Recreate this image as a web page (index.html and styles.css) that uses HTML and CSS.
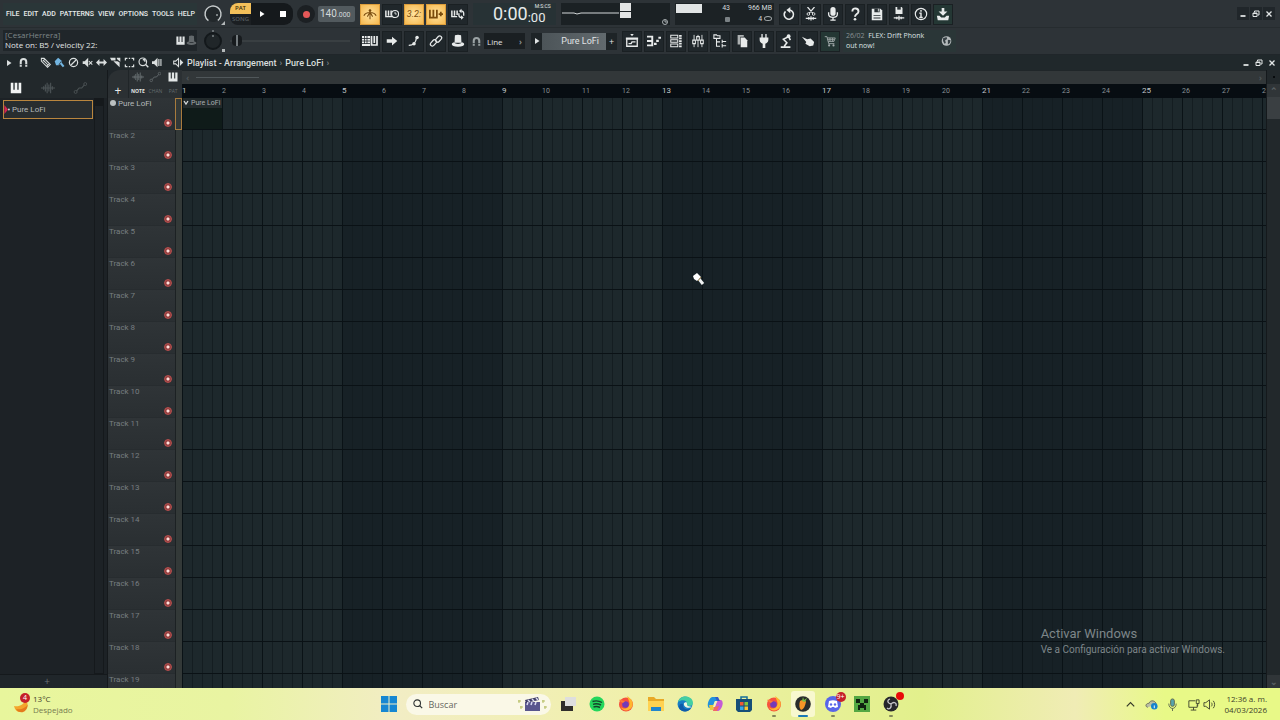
FILE: index.html
```html
<!DOCTYPE html>
<html lang="es">
<head>
  <meta charset="UTF-8" />
  <meta name="viewport" content="width=device-width, initial-scale=1.0"/>
  <title>Playlist - Arrangement</title>
  <link rel="stylesheet" href="styles.css">
</head>
<body>
  <!-- Icon symbols -->
  <svg class="symbols" aria-hidden="true">
    <symbol id="piano" viewBox="0 0 16 16"><path d="M2 2v12h12V2h-3v8h-1.500V2h-3v8H5V2z" fill="currentColor"/></symbol>
    <symbol id="magnet" viewBox="0 0 16 16"><path d="M4 14V7a4 4 0 0 1 8 0v7" fill="none" stroke="currentColor" stroke-width="3"/><path d="M2 11h4M10 11h4" stroke="#20272b"/></symbol>
    <symbol id="wave" viewBox="0 0 16 16"><path d="M0 8h16M3 6v4M5 4v8M7 2v12M9 4v8M11 2v12M13 6v4" stroke="currentColor" stroke-width="1.300"/></symbol>
    <symbol id="auto" viewBox="0 0 16 16"><path d="M4 11.500 7 8h3l3-3.500" fill="none" stroke="currentColor" stroke-width="1.200"/><circle cx="3" cy="12.500" r="1.700" fill="none" stroke="currentColor"/><circle cx="14" cy="3.500" r="1.700" fill="none" stroke="currentColor"/></symbol>
    <symbol id="metronome" viewBox="0 0 16 16"><path d="M8 3v11M1 10c2-5 12-5 14 0M8 6l-3 5M8 6l3 5" fill="none" stroke="currentColor" stroke-width="1.200"/><circle cx="8" cy="4" r="1.500" fill="currentColor"/></symbol>
    <symbol id="pianoclock" viewBox="0 0 16 16"><path d="M1 4v7h8M4 4v6M7 4v6" fill="none" stroke="currentColor" stroke-width="1.700"/><circle cx="11.500" cy="8" r="4" fill="#20272b" stroke="currentColor" stroke-width="1.300"/><path d="M11.500 5.500V8h2" fill="none" stroke="currentColor"/></symbol>
    <symbol id="pianoplus" viewBox="0 0 16 16"><path d="M1 3v9h8V3M5 3v8M11 8h5M13.500 5.500v5" fill="none" stroke="currentColor" stroke-width="2"/></symbol>
    <symbol id="pianoloop" viewBox="0 0 16 16"><path d="M1 4v7h6M4 4v6M7 4v5" fill="none" stroke="currentColor" stroke-width="1.700"/><path d="M14.500 10V7a3 3 0 0 0-3-2.500M9 7v2.500a3 3 0 0 0 3 2.500" fill="none" stroke="currentColor" stroke-width="1.500"/><path d="m12 2-3 2.500L12 7zM11.500 9.500l3 2.500-3 2.500z" fill="currentColor"/></symbol>
    <symbol id="keys" viewBox="0 0 16 16"><path d="M0 3h8v10H0z" fill="currentColor"/><path d="M0 5.500h8M0 8h8M0 10.500h8M2.500 3v8M5 3v8" stroke="#20272b" stroke-width=".8"/><path d="M9.500 3v9h5.500V3M12.300 3v7" fill="none" stroke="currentColor" stroke-width="1.700"/></symbol>
    <symbol id="arrow" viewBox="0 0 16 16"><path d="M2 6h6V3l6 5-6 5v-3H2z" fill="currentColor"/></symbol>
    <symbol id="curve" viewBox="0 0 16 16"><path d="M2 13c6 0 8-3 9-9" fill="none" stroke="currentColor" stroke-width="1.600"/><circle cx="11.500" cy="4" r="2" fill="currentColor"/><circle cx="8" cy="11" r="2" fill="currentColor"/></symbol>
    <symbol id="link" viewBox="0 0 16 16"><g fill="none" stroke="currentColor" stroke-width="1.400"><rect x="1" y="8" width="8" height="4.500" rx="2.200" transform="rotate(-48 5 10.200)"/><rect x="7" y="3.500" width="8" height="4.500" rx="2.200" transform="rotate(-48 11 5.700)"/></g></symbol>
    <symbol id="hat" viewBox="0 0 16 16"><path d="M4.500 1.500c2-1 5-1 7 0l.5 8.500H4z" fill="currentColor"/><path d="M4 9.500c-5 1-4 5 4 5s9-4 4-5c0 2.500-8 2.500-8 0z" fill="currentColor"/></symbol>
    <symbol id="playlist" viewBox="0 0 16 16"><path d="M6 0h4L8 2.500zM1 4h14v2.500H1z" fill="currentColor"/><path d="M2 6v8h12V6M4 11h3l1-2h4" fill="none" stroke="currentColor" stroke-width="1.500"/></symbol>
    <symbol id="roll" viewBox="0 0 16 16"><path d="M0 3h6v10H0M0 8h5" fill="none" stroke="currentColor" stroke-width="2.200"/><path d="M8 10h3v2.500H8zM10.500 6.500h3V9h-3zM13 3h3v2.500h-3z" fill="currentColor"/></symbol>
    <symbol id="rack" viewBox="0 0 16 16"><g fill="none" stroke="currentColor" stroke-width="1.200"><path d="M2 1.500h8v3H2zM2 6.500h8v3H2zM2 11.500h8v3H2z"/><path d="M13 1v14" stroke-width="3" stroke-dasharray="2 1"/></g></symbol>
    <symbol id="mixer" viewBox="0 0 16 16"><path d="M3.500 1v14M8 1v14M12.500 1v14" stroke="currentColor"/><path d="M2 7h3v4H2zM6.500 3h3v4h-3zM11 7h3v4h-3z" fill="#20272b" stroke="currentColor" stroke-width="1.200"/></symbol>
    <symbol id="tree" viewBox="0 0 16 16"><path d="M1 1h3l1 1h3v3H1zM4 5v9h4M4 9h4M10 8.500h5M10 13.500h5M10.500 6.500v4M10.500 11.500v4" fill="none" stroke="currentColor" stroke-width="1.200"/></symbol>
    <symbol id="files" viewBox="0 0 16 16"><path d="M3 1h7v2H6v9H3z" fill="currentColor" opacity=".7"/><path d="M6.500 4H11l3 3v8H6.500z" fill="currentColor"/></symbol>
    <symbol id="plug" viewBox="0 0 16 16"><path d="M5 0h1.500v4h3V0H11v4h2v2c0 3-1 4-3.500 5v5h-3v-5C4 10 3 9 3 6V4h2z" fill="currentColor"/></symbol>
    <symbol id="lamp" viewBox="0 0 16 16"><path d="M11 3 5 6l4 4-3 4M2 15h11M11 3l2 4" fill="none" stroke="currentColor" stroke-width="1.800"/><circle cx="11" cy="2.500" r="2.200" fill="currentColor"/></symbol>
    <symbol id="hand" viewBox="0 0 16 16"><path d="m1 3 6 3 4-1 4 4-1 4-4 1-5-3 1-2z" fill="currentColor"/></symbol>
    <symbol id="cart" viewBox="0 0 16 16"><path d="M2 3h2.500l2 8h6.500M5 4.500h9l-1.500 4H6M8 4.500v4M11 4.500v4M5 6.500h8" fill="none" stroke="currentColor"/><circle cx="7" cy="13" r="1.200" fill="currentColor"/><circle cx="12" cy="13" r="1.200" fill="currentColor"/></symbol>
    <symbol id="undo" viewBox="0 0 16 16"><path d="M4 5a5.300 5.300 0 1 0 5-1.500" fill="none" stroke="currentColor" stroke-width="1.800"/><path d="M9.500 0v7L5 3.500z" fill="currentColor"/></symbol>
    <symbol id="cut" viewBox="0 0 16 16"><path d="m4 0 6 7M12 0 6 7M2 13h12M5.500 11.500v3M8 10.500v5M10.500 11.500v3" stroke="currentColor" stroke-width="1.400"/><circle cx="5" cy="8" r="1.500" fill="none" stroke="currentColor"/><circle cx="11" cy="8" r="1.500" fill="none" stroke="currentColor"/></symbol>
    <symbol id="mic" viewBox="0 0 16 16"><rect x="5" y="0" width="6" height="10" rx="3" fill="currentColor"/><path d="M3 6v2c0 5 10 5 10 0V6M8 12v3M5 15h6" fill="none" stroke="currentColor" stroke-width="1.500"/></symbol>
    <symbol id="help" viewBox="0 0 16 16"><path d="M5 5c0-5 7-4 7 0 0 3-4 3-4 6" fill="none" stroke="currentColor" stroke-width="2.200"/><circle cx="8" cy="14" r="1.500" fill="currentColor"/></symbol>
    <symbol id="save" viewBox="0 0 16 16"><path d="M2 2h10l2 2v11H2z" fill="currentColor"/><path d="M5 2h6v4H5zM4 9h8v1H4zM4 12h8v1H4z" fill="#293034"/><path d="M9 2h1v3H9z" fill="currentColor"/></symbol>
    <symbol id="savenew" viewBox="0 0 16 16"><path d="M4 0h7l1 1v7H4z" fill="currentColor"/><path d="M6 0h4v3H6z" fill="#293034"/><path d="M2 12.500h12M5.500 11v3M8 10v5M10.500 11v3" stroke="currentColor" stroke-width="1.400"/></symbol>
    <symbol id="info" viewBox="0 0 16 16"><circle cx="8" cy="8" r="6.500" fill="none" stroke="currentColor" stroke-width="1.300"/><path d="M6 7h2v5M6 12h4M8 3.500v2" fill="none" stroke="currentColor" stroke-width="1.600"/></symbol>
    <symbol id="download" viewBox="0 0 16 16"><path d="M6.500 1h3v4H13L8 10 3 5h3.500z" fill="currentColor"/><path d="M1 10h3l2 2h4l2-2h3l-1 5H2z" fill="currentColor"/></symbol>
    <symbol id="globe" viewBox="0 0 16 16"><circle cx="8" cy="8" r="7" fill="#b4babb"/><path d="M3 4l5-2 1 3-3 2 1 4-2 1-2-4zM10 6l4 1-1 4-3 2z" fill="#364044"/></symbol>
    <symbol id="min" viewBox="0 0 16 16"><path d="M3 12h10" stroke="currentColor" stroke-width="3.500"/></symbol>
    <symbol id="restore" viewBox="0 0 16 16"><path d="M5 5V2h9v8h-3" fill="none" stroke="currentColor" stroke-width="2"/><path d="M2 6h8v7H2zM2 7h8" fill="none" stroke="currentColor" stroke-width="2"/></symbol>
    <symbol id="close" viewBox="0 0 16 16"><path d="m3 3 10 10M13 3 3 13" stroke="currentColor" stroke-width="2.500"/></symbol>
    <symbol id="pencil" viewBox="0 0 16 16"><path d="M2 2h4l9 9-4 4-9-9zM4 6l3-3M5 5l7 7M10 13l4-4" fill="none" stroke="currentColor" stroke-width="1.500"/></symbol>
    <symbol id="brush" viewBox="0 0 16 16"><path d="M1 6 6 1l6 5-5 6H3z" fill="currentColor"/><path d="m9 8 5 6" stroke="currentColor" stroke-width="3"/><path d="m7 11 4-5" stroke="#20272b"/></symbol>
    <symbol id="ban" viewBox="0 0 16 16"><circle cx="8" cy="8" r="6" fill="none" stroke="currentColor" stroke-width="1.800"/><path d="m4 12 8-8" stroke="currentColor" stroke-width="1.800"/></symbol>
    <symbol id="mute" viewBox="0 0 16 16"><path d="M1 6h3l5-5v14l-5-5H1z" fill="currentColor"/><path d="m10 6 5 5M15 6l-5 5" stroke="currentColor" stroke-width="1.500"/></symbol>
    <symbol id="slip" viewBox="0 0 16 16"><path d="m0 8 5-5v3.500h6V3l5 5-5 5V9.500H5V13z" fill="currentColor"/></symbol>
    <symbol id="slice" viewBox="0 0 16 16"><path d="M0 1h8v4H2zM5 6l9 9V8l-3-2zM10 1h5v6l-5-4z" fill="currentColor"/></symbol>
    <symbol id="select" viewBox="0 0 16 16"><path d="M2 5V2h3M11 2h3v3M14 11v3h-3M5 14H2v-3M7 2h2M7 14h2" fill="none" stroke="currentColor" stroke-width="1.800"/></symbol>
    <symbol id="zoom" viewBox="0 0 16 16"><circle cx="7" cy="7" r="5.500" fill="none" stroke="currentColor" stroke-width="1.700"/><path d="m11 11 4 4M7 4h3v3" fill="none" stroke="currentColor" stroke-width="2"/></symbol>
    <symbol id="sound" viewBox="0 0 16 16"><path d="M0 6h3l5-5v14l-5-5H0z" fill="currentColor"/><path d="M10 3v10M13 3v10" stroke="currentColor" stroke-width="1.600"/></symbol>
    <symbol id="speaker" viewBox="0 0 16 16"><path d="M1 6h3l4-4v12l-4-4H1z" fill="none" stroke="currentColor" stroke-width="1.500"/><path d="M10 3v10l5-5z" fill="currentColor"/></symbol>
    <symbol id="play" viewBox="0 0 16 16"><path d="m4 2 9 6-9 6z" fill="currentColor"/></symbol>
    <symbol id="firefox" viewBox="0 0 16 16"><circle cx="8" cy="8.500" r="7" fill="#f6513e"/><path d="M9 0c5 3 7 7 5 11-3 5-10 4-11 0 2 2 5 2 7 0 3-3 1-6-1-11z" fill="#ffb52e"/><circle cx="7.500" cy="8.500" r="3.300" fill="#743ab8"/><path d="M1 4c2-1 4 1 6 1L5 7 3 6z" fill="#ff7c35"/></symbol>
  </svg>

  <header class="app-header">
    <div class="panel-stack main-panel">
      <nav class="menu">
        <button>FILE</button><button>EDIT</button><button>ADD</button><button>PATTERNS</button><button>VIEW</button><button>OPTIONS</button><button>TOOLS</button><button>HELP</button>
      </nav>
      <div class="hint">
        <div><span class="project">[CesarHerrera]</span><br>Note on: B5 / velocity 22:</div>
        <svg class="icon small"><use href="#piano"/></svg>
        <svg class="icon small faded"><use href="#hat"/></svg>
      </div>
    </div>

    <div class="panel-stack knobs">
      <svg viewBox="0 0 22 22"><circle cx="10" cy="11" r="8" fill="#22282b" stroke="#c9cecf" stroke-width="1.400" stroke-dasharray="40 11" transform="rotate(125 10 11)"/><circle cx="14" cy="12" r="1" fill="#9ba2a4"/><path d="m22 18v4h-4z" fill="#b3b8b9"/></svg>
      <svg viewBox="0 0 22 22"><circle cx="10" cy="11" r="8" fill="#202629" stroke="#13181b" stroke-width="2"/><circle cx="10" cy="6" r="1" fill="#7b8386"/><circle cx="10" cy="1" r="1" fill="#7b8386"/><path d="M19 19h3v3h-3z" fill="#b3b8b9"/></svg>
    </div>

    <div class="panel-stack transport-panel">
      <div class="transport">
        <button class="mode"><span class="pat">PAT</span><span class="song">SONG</span></button>
        <button class="play" aria-label="Play"><svg class="icon tiny"><use href="#play"/></svg></button>
        <button class="stop" aria-label="Stop"><i></i></button>
        <button class="record" aria-label="Record"><i></i></button>
        <output class="tempo">140<small>.000</small></output>
      </div>
      <input class="pitch" type="range" min="0" max="100" value="0" aria-label="Song position">
    </div>

    <div class="panel-stack tools-panel">
      <div class="tool-row">
        <div class="buttons">
          <button class="tool on" aria-label="Metronome"><svg class="icon"><use href="#metronome"/></svg></button>
          <button class="tool" aria-label="Wait for input"><svg class="icon"><use href="#pianoclock"/></svg></button>
          <button class="tool on count" aria-label="Countdown">3.2:</button>
          <button class="tool on" aria-label="Blend notes"><svg class="icon"><use href="#pianoplus"/></svg></button>
          <button class="tool" aria-label="Loop record"><svg class="icon"><use href="#pianoloop"/></svg></button>
        </div>
        <div class="time"><span>0:00</span><div><sup>M:S:CS</sup><small>:00</small></div></div>
        <div class="scope">
          <svg viewBox="0 0 109 22"><path d="M1 10h12l3 1 4-1h38" fill="none" stroke="#d4d8d9"/><path d="M59 0h11v8H59zM59 9h11v6H59z" fill="#e2e4e4"/><circle cx="104" cy="19" r="2.500" fill="none" stroke="#a7adaf"/><path d="M104 17v2h2" fill="none" stroke="#a7adaf"/></svg>
        </div>
        <div class="cpu">
          <i class="load"></i><span>43</span><span>966 MB</span><i class="led"></i><span class="poly">4 <i class="ring"></i></span>
        </div>
        <div class="buttons">
          <button class="tool" aria-label="Undo"><svg class="icon"><use href="#undo"/></svg></button>
          <button class="tool" aria-label="Cut"><svg class="icon"><use href="#cut"/></svg></button>
          <button class="tool" aria-label="Record audio"><svg class="icon"><use href="#mic"/></svg></button>
          <button class="tool" aria-label="Help"><svg class="icon"><use href="#help"/></svg></button>
          <button class="tool" aria-label="Save"><svg class="icon"><use href="#save"/></svg></button>
          <button class="tool" aria-label="Save new version"><svg class="icon"><use href="#savenew"/></svg></button>
          <button class="tool" aria-label="About"><svg class="icon"><use href="#info"/></svg></button>
          <button class="tool green" aria-label="Download"><svg class="icon"><use href="#download"/></svg></button>
        </div>
      </div>
      <div class="tool-row">
        <div class="buttons">
          <button class="tool" aria-label="Typing keyboard"><svg class="icon wide"><use href="#keys"/></svg></button>
          <button class="tool" aria-label="Step edit"><svg class="icon"><use href="#arrow"/></svg></button>
          <button class="tool" aria-label="Slide"><svg class="icon"><use href="#curve"/></svg></button>
          <button class="tool" aria-label="Link"><svg class="icon"><use href="#link"/></svg></button>
          <button class="tool" aria-label="Performance"><svg class="icon"><use href="#hat"/></svg></button>
        </div>
        <div class="snap"><svg class="icon small"><use href="#magnet"/></svg><button>Line <b>›</b></button></div>
        <div class="pattern">
          <button aria-label="Pattern menu"><svg class="icon tiny"><use href="#play"/></svg></button>
          <button class="name">Pure LoFi</button>
          <button aria-label="Add pattern">+</button>
        </div>
        <div class="buttons">
          <button class="tool" aria-label="Playlist"><svg class="icon"><use href="#playlist"/></svg></button>
          <button class="tool" aria-label="Piano roll"><svg class="icon"><use href="#roll"/></svg></button>
          <button class="tool" aria-label="Channel rack"><svg class="icon"><use href="#rack"/></svg></button>
          <button class="tool" aria-label="Mixer"><svg class="icon"><use href="#mixer"/></svg></button>
          <button class="tool" aria-label="Browser"><svg class="icon"><use href="#tree"/></svg></button>
          <button class="tool" aria-label="Project files"><svg class="icon"><use href="#files"/></svg></button>
          <button class="tool" aria-label="Plugins"><svg class="icon"><use href="#plug"/></svg></button>
          <button class="tool" aria-label="Tempo tapper"><svg class="icon"><use href="#lamp"/></svg></button>
          <button class="tool" aria-label="Touch"><svg class="icon"><use href="#hand"/></svg></button>
          <button class="tool green dim" aria-label="Shop"><svg class="icon"><use href="#cart"/></svg></button>
        </div>
        <div class="news"><p><span>26/02</span>&nbsp; FLEX: Drift Phonk<br>out now!</p><svg class="icon"><use href="#globe"/></svg></div>
      </div>
    </div>

    <div class="window-buttons boxed">
      <button aria-label="Minimize"><svg class="icon tiny"><use href="#min"/></svg></button>
      <button aria-label="Restore"><svg class="icon tiny"><use href="#restore"/></svg></button>
      <button aria-label="Close"><svg class="icon tiny"><use href="#close"/></svg></button>
    </div>
  </header>

  <div class="titlebar">
    <button aria-label="Menu"><svg class="icon tiny"><use href="#play"/></svg></button>
    <button class="snap-button" aria-label="Snap"><svg class="icon small"><use href="#magnet"/></svg></button>
    <button aria-label="Draw"><svg class="icon small"><use href="#pencil"/></svg></button>
    <button class="active" aria-label="Paint"><svg class="icon small"><use href="#brush"/></svg></button>
    <button aria-label="Delete"><svg class="icon small"><use href="#ban"/></svg></button>
    <button aria-label="Mute"><svg class="icon small"><use href="#mute"/></svg></button>
    <button aria-label="Slip"><svg class="icon small"><use href="#slip"/></svg></button>
    <button aria-label="Slice"><svg class="icon small"><use href="#slice"/></svg></button>
    <button aria-label="Select"><svg class="icon small"><use href="#select"/></svg></button>
    <button aria-label="Zoom"><svg class="icon small"><use href="#zoom"/></svg></button>
    <button aria-label="Playback"><svg class="icon small"><use href="#sound"/></svg></button>
    <h1><svg class="icon small"><use href="#speaker"/></svg> Playlist - Arrangement <b>›</b> Pure LoFi <b>›</b></h1>
    <div class="window-buttons">
      <button aria-label="Minimize playlist"><svg class="icon tiny"><use href="#min"/></svg></button>
      <button aria-label="Restore playlist"><svg class="icon tiny"><use href="#restore"/></svg></button>
      <button aria-label="Close playlist"><svg class="icon tiny"><use href="#close"/></svg></button>
    </div>
  </div>

  <main class="playlist">
    <aside class="picker">
      <div class="picker-tabs">
        <button class="active" aria-label="Patterns"><svg class="icon"><use href="#piano"/></svg></button>
        <button aria-label="Audio clips"><svg class="icon"><use href="#wave"/></svg></button>
        <button aria-label="Automation clips"><svg class="icon"><use href="#auto"/></svg></button>
      </div>
      <div class="picker-body">
        <div class="picker-list"><button class="picker-item"><svg viewBox="0 0 8 10"><path d="M0 0l4 5-4 5z" fill="#d52450"/><circle cx="5" cy="5" r="1" fill="#ddd"/></svg>Pure LoFi</button></div>
        <div class="picker-scroll"><i></i></div>
      </div>
      <button class="picker-add" aria-label="Add pattern">+</button>
    </aside>

    <section class="tracks">
      <div class="tracks-head">
        <button class="add-track" aria-label="Add track">+</button>
        <div class="clip-modes">
          <svg class="icon"><use href="#wave"/></svg><svg class="icon"><use href="#auto"/></svg><svg class="icon lit"><use href="#piano"/></svg>
          <span class="lit">NOTE</span><span>CHAN</span><span>PAT</span>
        </div>
      </div>
      <div id="trackList"></div>
    </section>

    <section class="arrangement">
      <div class="h-scroll"><b>‹</b><i></i><b class="end">›</b></div>
      <div class="ruler" id="ruler"></div>
      <div class="lanes" id="lanes">
        <div class="clip"><span><svg viewBox="0 0 6 6"><path d="m1 1 2 3 2-3" fill="none" stroke="#d5d9da" stroke-width="1.300"/></svg>Pure LoFi</span></div>
        <svg class="cursor" viewBox="0 0 12 13"><path d="M0 3 4 0l4 4-4 4-3-2z" fill="#fff"/><path d="m6 6 4 5" stroke="#eef1f1" stroke-width="3"/><path d="m5 8 3-4" stroke="#a58a58"/></svg>
        <div class="watermark"><strong>Activar Windows</strong><br>Ve a Configuración para activar Windows.</div>
      </div>
    </section>

    <div class="v-scroll"><i class="dot"></i><b>⌃</b><i class="thumb"></i><b class="down">⌄</b></div>
  </main>

  <footer class="taskbar">
    <button class="weather">
      <span class="moon"><svg viewBox="0 0 18 18"><path d="M1 11c5 1 10-1 12-7 4 7-1 13-6 13-3 0-5-2-6-6z" fill="#f3a52b"/><path d="M3 14c5 1 10-1 12-5-1 10-9 10-12 5z" fill="#e47b1c"/></svg><em>4</em></span>
      <span>13°C<br><small>Despejado</small></span>
    </button>
    <div class="apps">
      <button class="app" aria-label="Inicio"><svg viewBox="0 0 16 16"><path d="M0 0h7.500v7.500H0zM8.500 0H16v7.500H8.500zM0 8.500h7.500V16H0zM8.500 8.500H16V16H8.500z" fill="#1687d2"/></svg></button>
      <label class="search">
        <svg viewBox="0 0 12 12"><circle cx="5" cy="5" r="4" fill="none" stroke="#303434" stroke-width="1.300"/><path d="m8 8 3 3" stroke="#303434" stroke-width="1.500"/></svg>
        <input type="text" placeholder="Buscar" aria-label="Buscar">
        <svg class="clapper" viewBox="0 0 30 16"><path d="M8 6h15v9H8z" fill="#59568d"/><path d="m8 4 13-3 1 3-13 3z" fill="#403e68"/><path d="m11 4 2 2M15 3l2 2M19 2l2 2M11 6l-1 3M15 6l-1 3M19 6l-1 3" stroke="#dadaf1" stroke-width="1.500"/><path d="M2 4v3M1 5h3M4 10v3M3 11h3M26 4v3M25 5h3M28 10v3M27 11h3" stroke="#b5bd63"/></svg>
      </label>
      <div class="app-strip">
        <button class="app" aria-label="Vista de tareas"><svg viewBox="0 0 16 16"><path d="M1 5h12v10H1z" fill="#302e2c"/><path d="M5 1h11v9H5z" fill="#dedede"/></svg></button>
        <button class="app" aria-label="Spotify"><svg viewBox="0 0 16 16"><circle cx="8" cy="8" r="7.500" fill="#24d65c"/><path d="M3.500 5.500c3-1 7-.500 9.500 1M4 8.300c3-1 5.500-.500 8 .700M4.500 11c2-.700 4.500-.500 6.500.500" fill="none" stroke="#15432a" stroke-width="1.400"/></svg></button>
        <button class="app" aria-label="Firefox"><svg><use href="#firefox"/></svg></button>
        <button class="app" aria-label="Explorador"><svg viewBox="0 0 16 16"><path d="M0 1h6l2 2h8v12H0z" fill="#e9a926"/><path d="M0 5h16v10H0z" fill="#ffd251"/><path d="M3 11h10v4H3z" fill="#2186ce"/></svg></button>
        <button class="app" aria-label="Edge"><svg viewBox="0 0 16 16"><circle cx="8" cy="8" r="7.500" fill="#177dc4"/><path d="M1 6C3-2 16-1 16 7c0 3-4 4-6 2 1-5-5-6-9-3z" fill="#43cfa3"/><path d="M6 8c-1 4 3 7 8 4-3 5-10 4-12 0 0-4 2-5 4-4z" fill="#105ba8"/><path d="M9 6c2 1 0 3 2 4l4 1c-4 2-9 0-8-4z" fill="#eef7e0"/></svg></button>
        <button class="app" aria-label="Copilot"><svg viewBox="0 0 16 16"><path d="M5 1h5l2 4H8L5 12H2c-3-2 0-10 3-11z" fill="#2292dc"/><path d="M2 9h6l-2 5H3z" fill="#e6c940"/><path d="M11 4h3c4 2 0 11-3 11H6l3-7z" fill="#c55bd6"/><path d="m7 11 5-1-2 5H6z" fill="#f16b61"/><path d="M8 1h3l2 4h-3z" fill="#335bca"/><path d="m8 5h2L8 11H6z" fill="#f2f0bb"/></svg></button>
        <button class="app" aria-label="Store"><svg viewBox="0 0 16 16"><path d="M5 4V1h6v3" fill="none" stroke="#166f9c" stroke-width="1.500"/><path d="M0 3h16v11l-2 2H2l-2-2z" fill="#164f78"/><path d="M4 6h3.500v3.500H4z" fill="#f05a35"/><path d="M8.500 6H12v3.500H8.500z" fill="#83c63e"/><path d="M4 10.500h3.500V14H4z" fill="#36a9e8"/><path d="M8.500 10.500H12V14H8.500z" fill="#fac532"/></svg></button>
        <button class="app open" aria-label="Firefox privado"><svg><use href="#firefox"/></svg></button>
        <button class="app open current" aria-label="FL Studio"><svg viewBox="0 0 16 16"><circle cx="8" cy="8" r="7.800" fill="#292c2c"/><path d="M5 5c2-2 6-1 6 1-1 4-2 7-5 8-2-2-2-6-1-9z" fill="#f79527"/><path d="M7 5 8 1l1 3 3-2-2 4z" fill="#76bf45"/></svg></button>
        <button class="app open" aria-label="Discord"><svg viewBox="0 0 16 16"><circle cx="8" cy="8" r="8" fill="#5865e8"/><path d="M4 5c3-1 5-1 8 0l1 6-3 1-1-1H7l-1 1-3-1z" fill="#fff"/><circle cx="6" cy="8.500" r="1.200" fill="#5865e8"/><circle cx="10" cy="8.500" r="1.200" fill="#5865e8"/></svg><em>9+</em></button>
        <button class="app" aria-label="Minecraft"><svg viewBox="0 0 16 16"><path d="M0 0h16v16H0z" fill="#53a743"/><path d="M2 3h4v4H2zM10 3h4v4h-4zM6 7h4v2h2v5h-2v-2H6v2H4V9h2z" fill="#102111"/></svg></button>
        <button class="app open" aria-label="OBS"><svg viewBox="0 0 16 16"><circle cx="8" cy="8" r="7.500" fill="#26262b"/><path d="M8 8c-4-1-4-4-1-5M8 8c3-3 6-1 5 2M8 8c1 4-2 6-4 4" fill="none" stroke="#c6c6ca" stroke-width="1.300"/></svg><em class="rec"></em></button>
      </div>
    </div>
    <div class="tray">
      <svg viewBox="0 0 14 14"><path d="m3 9 4-4 4 4" fill="none" stroke="#343827" stroke-width="1.300"/></svg>
      <svg viewBox="0 0 14 14"><path d="M3 10c-4-1-1-5 1-4 2-5 8-3 8 1" fill="#b9bea3" stroke="#666b5b"/><circle cx="10" cy="9" r="3.500" fill="#1583cd"/><path d="M10 8v3" stroke="#fff"/></svg>
      <svg viewBox="0 0 14 14"><rect x="5" y="1" width="4" height="8" rx="2" fill="#55a4ae" stroke="#5d684e"/><path d="M3 6c0 7 8 7 8 0M7 11v3" fill="none" stroke="#5d684e"/></svg>
      <span class="net"><svg viewBox="0 0 14 14"><path d="M9 3H2v7h9V7M4 13h6M7 10v3M10 2h3v4h-3zM11.500 6v3" fill="none" stroke="#41452f"/></svg><svg viewBox="0 0 14 14"><path d="M1 5h2l4-3v10L3 9H1zM9 5c1 1 1 3 0 4M11 3c2 2 2 6 0 8" fill="none" stroke="#41452f"/></svg></span>
      <time>12:36 a. m.<br>04/03/2026</time>
    </div>
  </footer>

  <script>
    const ruler = document.getElementById("ruler");
    const trackList = document.getElementById("trackList");
    const lanes = document.getElementById("lanes");

    // Bar numbers
    for (let bar = 1; bar <= 28; bar++) {
      ruler.innerHTML += `<span class="${bar % 4 === 1 ? "strong" : ""}">${bar}</span>`;
    }

    // Track headers and their lanes
    for (let n = 1; n <= 19; n++) {
      const name = n === 1 ? `<i class="badge"></i>Pure LoFi` : `Track ${n}`;
      trackList.innerHTML += `
        <div class="track ${n === 1 ? "selected" : ""}">
          <div class="track-body"><span>${name}</span><button class="arm" aria-label="Mute track ${n}"></button></div>
          <div class="track-strip"></div>
        </div>`;
      lanes.insertAdjacentHTML("beforeend", `<div class="lane"></div>`);
    }
  </script>
</body>
</html>
```
FILE: styles.css
```css
* {
  box-sizing: border-box;
}

body {
  margin: 0;
  height: 100vh;
  display: flex;
  flex-direction: column;
  overflow: hidden;
  background: #1d2327;
  color: #c5cacc;
  font-family: "Open Sans", "Noto Sans", sans-serif;
  font-size: 9px;
}

button {
  border: 0;
  padding: 0;
  margin: 0;
  background: none;
  color: inherit;
  font: inherit;
  display: flex;
  align-items: center;
  justify-content: center;
}

svg {
  display: block;
  flex: none;
}

.symbols {
  position: absolute;
  width: 0;
  height: 0;
}

.icon {
  width: 14px;
  height: 14px;
}

.icon.small {
  width: 11px;
  height: 11px;
}

.icon.tiny {
  width: 8px;
  height: 8px;
}

.icon.wide {
  width: 16px;
  height: 16px;
}

/* Header */
.app-header {
  flex: none;
  display: flex;
  height: 55px;
  padding: 3px 4px 3px 3px;
  background: linear-gradient(#2d3337 27px, #262c2f 27px 28px, #2d3337 28px);
  border-bottom: 1px solid #20262a;
}

.panel-stack {
  flex: none;
  display: flex;
  flex-direction: column;
  gap: 5px;
}

.panel-stack > * {
  height: 22px;
}

.main-panel {
  width: 194px;
  margin-right: 6px;
}

.menu {
  display: flex;
  align-items: center;
  justify-content: space-between;
  padding: 0 2px 0 3px;
  background: #2a3638;
  color: #e6eaea;
  font-family: Roboto, "Open Sans", sans-serif;
  font-size: 7px;
  font-weight: 500;
}

.hint {
  display: flex;
  align-items: center;
  padding: 0 0 0 2px;
  background: #20262a;
  color: #e1e5e6;
  font-size: 8px;
  line-height: 10px;
}

.hint div {
  flex: 1;
}

.hint .project {
  color: #7f8689;
}

.faded {
  opacity: 0.35;
}

.knobs {
  width: 22px;
  margin-right: 5px;
}

.transport-panel {
  width: 125px;
  margin-right: 5px;
}

.transport {
  display: flex;
  align-items: center;
}

.mode {
  flex: none;
  width: 21px;
  height: 22px;
  flex-direction: column;
  border-radius: 8px 0 0 8px;
  overflow: hidden;
  background: #1b1f22;
  font-size: 6px;
  font-weight: 600;
  line-height: 11px;
}

.mode span {
  width: 100%;
}

.mode .pat {
  background: #f3c05a;
  color: #3c2a08;
}

.mode .song {
  color: #555c60;
}

.play,
.stop {
  flex: none;
  width: 21px;
  height: 22px;
  background: #15191c;
  color: #fff;
}

.stop {
  border-radius: 0 9px 9px 0;
}

.stop i {
  width: 6px;
  height: 6px;
  background: #fff;
}

.record {
  flex: none;
  width: 18px;
  height: 18px;
  margin: 0 3px 0 4px;
  border-radius: 50%;
  background: #1c2023;
}

.record i {
  width: 7px;
  height: 7px;
  border-radius: 50%;
  background: #e45858;
}

.tempo {
  flex: 1;
  height: 16px;
  padding-left: 2px;
  border-radius: 2px;
  background: #525a5e;
  color: #d3d8da;
  font-family: Roboto, "Open Sans", sans-serif;
  font-size: 10px;
  line-height: 16px;
}

.tempo small {
  font-size: 7px;
}

.pitch {
  appearance: none;
  width: 120px;
  margin: 0;
  background: linear-gradient(#393f42, #393f42) center / 100% 2px no-repeat;
}

.pitch::-webkit-slider-thumb {
  appearance: none;
  width: 10px;
  height: 11px;
  margin-left: 2px;
  border-radius: 4px;
  background: linear-gradient(90deg, #171b1e 4px, #737a7d 4px 6px, #171b1e 6px);
}

.tool-row {
  display: flex;
  align-items: center;
  gap: 5px;
}

.buttons {
  display: flex;
  gap: 2px;
}

.tool {
  width: 20px;
  height: 21px;
  background: #20272b;
  border: 1px solid #1a2023;
  color: #e8ebeb;
}

.tool.on {
  background: radial-gradient(#ffe3a0, #f6b84e);
  border-color: #dd9e3c;
  color: #7a4b0c;
}

.tool.count {
  font-family: Roboto, "Open Sans", sans-serif;
  font-size: 9px;
  font-style: italic;
}

.tool.green {
  background: #243734;
}

.tool.dim {
  color: #a3abac;
}

.time {
  display: flex;
  width: 83px;
  height: 22px;
  padding-left: 20px;
  background: #273235;
  color: #e6eaeb;
  font-family: Roboto, "Open Sans", sans-serif;
  font-size: 18px;
  line-height: 22px;
  white-space: nowrap;
}

.time div {
  display: flex;
  flex-direction: column;
}

.time small {
  font-size: 13px;
  line-height: 15px;
}

.time sup {
  padding-left: 7px;
  font-size: 5px;
  line-height: 7px;
}

.scope {
  width: 109px;
  height: 22px;
  background: #1b2124;
}

.cpu {
  display: grid;
  grid-template-columns: 26px 1fr 42px;
  width: 99px;
  height: 22px;
  padding: 0 2px 0 1px;
  background: #1c2225;
  color: #d7dbdc;
  font-family: Roboto, "Open Sans", sans-serif;
  font-size: 7px;
  line-height: 11px;
  text-align: right;
}

.cpu .load {
  height: 9px;
  margin-top: 1px;
  background: #e1e4e4;
}

.cpu .led {
  grid-column: 2;
  justify-self: end;
  align-self: center;
  width: 5px;
  height: 5px;
  border-radius: 1px;
  background: #7b8285;
}

.cpu .ring {
  display: inline-block;
  width: 8px;
  height: 5px;
  border: 1px solid #a4aaac;
  border-radius: 50%;
}

.snap {
  display: flex;
  align-items: center;
  gap: 2px;
  width: 54px;
  margin-left: -2px;
  color: #9ba2a4;
}

.snap button {
  flex: 1;
  height: 16px;
  padding: 0 3px;
  justify-content: space-between;
  background: #1a1f22;
  color: #e1e4e5;
  font-size: 8px;
}

.snap b {
  color: #8a9193;
}

.pattern {
  display: flex;
  width: 86px;
  height: 17px;
  margin-left: 1px;
}

.pattern button {
  flex: 1;
  background: #1e2427;
  color: #e1e4e5;
}

.pattern .name {
  flex: none;
  width: 64px;
  justify-content: flex-end;
  padding-right: 7px;
  background: linear-gradient(90deg, #4c5458, #626a6e);
  font-family: Roboto, "Open Sans", sans-serif;
  font-size: 9px;
}

.news {
  display: flex;
  align-items: center;
  justify-content: space-between;
  width: 113px;
  height: 22px;
  margin-left: -2px;
  padding: 0 4px 0 3px;
  background: #2a3637;
  font-size: 7px;
  line-height: 10px;
  white-space: nowrap;
}

.news p {
  margin: 0;
  color: #dfe3e4;
}

.news p span {
  color: #899194;
}

.news .icon {
  width: 11px;
}

.window-buttons {
  display: flex;
  margin-left: auto;
  color: #e2e6e6;
}

.window-buttons button {
  width: 13px;
  height: 13px;
}

.window-buttons.boxed {
  margin-top: 4px;
  align-items: flex-start;
}

.boxed button {
  background: #20262a;
  border-right: 1px solid #2d3337;
}

/* Playlist window */
.titlebar {
  flex: none;
  display: flex;
  align-items: center;
  height: 15px;
  padding: 0 2px;
  background: #20282b;
  color: #d9dede;
}

.titlebar > button {
  width: 14px;
}

.titlebar .snap-button {
  margin-right: 8px;
}

.titlebar .active {
  color: #72b5e0;
}

.titlebar h1 {
  display: flex;
  align-items: center;
  gap: 3px;
  margin: 0 0 0 9px;
  font-family: Roboto, "Open Sans", sans-serif;
  font-size: 9px;
  font-weight: 500;
}

.titlebar h1 b {
  color: #7a8285;
}

.playlist {
  flex: 1;
  display: flex;
  min-height: 0;
  overflow: hidden;
}

.picker {
  flex: none;
  display: flex;
  flex-direction: column;
  width: 108px;
  border-right: 1px solid #15191c;
  background: #1d2226;
}

.picker-tabs {
  display: flex;
  align-items: flex-end;
  height: 28px;
  padding-bottom: 3px;
  background: #22282b;
  color: #4b5255;
}

.picker-tabs button {
  width: 32px;
}

.picker-tabs .active {
  color: #f2f4f4;
}

.picker-body {
  flex: 1;
  display: flex;
}

.picker-list {
  width: 94px;
  padding: 2px 1px 0 3px;
}

.picker-item {
  width: 100%;
  height: 19px;
  justify-content: flex-start;
  border: 1px solid #b9863e;
  background: #282d2f;
  color: #b4b9ba;
}

.picker-item,
.track-body {
  font-family: Roboto, "Open Sans", sans-serif;
  font-size: 8px;
}

.picker-item svg {
  width: 8px;
  height: 9px;
}

.picker-scroll {
  width: 10px;
  border: 1px solid #15191c;
  border-top: 0;
}

.picker-scroll i {
  display: block;
  height: 8px;
  background: #15191c;
}

.picker-add {
  height: 14px;
  padding-right: 13px;
  border-top: 1px solid #15191c;
  background: #20262a;
  color: #6b7174;
  font-size: 10px;
  line-height: 13px;
}

.tracks {
  flex: none;
  width: 74px;
  background: #20262a;
}

.tracks-head {
  display: flex;
  height: 28px;
  border-radius: 12px 0 0 0;
  background: #2b3033;
}

.add-track {
  width: 21px;
  padding-top: 12px;
  border-right: 1px solid #202528;
  color: #e7eaea;
  font-size: 12px;
}

.clip-modes {
  flex: 1;
  display: grid;
  grid-template-columns: repeat(3, 1fr);
  grid-template-rows: 14px 14px;
  place-items: center;
  color: #646b6e;
  font-size: 5px;
}

.clip-modes .icon {
  width: 12px;
  height: 12px;
}

.clip-modes .lit {
  color: #e4e7e7;
  font-weight: bold;
}

.track {
  display: flex;
  height: 32px;
}

.track-body {
  flex: 1;
  display: flex;
  justify-content: space-between;
  padding: 0 3px 2px 1px;
  border-bottom: 1px solid #272c2f;
  background: linear-gradient(#2f3437, #2a2f32);
  color: #777e81;
  line-height: 11px;
}

.selected .track-body {
  color: #b4b9ba;
}

.badge {
  display: inline-block;
  width: 6px;
  height: 6px;
  margin: 0 2px 0 1px;
  border-radius: 50%;
  background: #bbc0c1;
}

.arm {
  align-self: flex-end;
  width: 8px;
  height: 8px;
  border: 1px solid #b94e4e;
  border-radius: 50%;
  background: radial-gradient(#ffe0dc 1px, #94403f 2px);
}

.track-strip {
  width: 7px;
  border-left: 1px solid #1c2123;
  background: #333938;
}

.selected .track-strip {
  border: 1px solid #a87b3d;
}

.arrangement {
  flex: 1;
  min-width: 0;
  overflow: hidden;
}

.h-scroll {
  display: flex;
  align-items: center;
  height: 14px;
  padding: 0 4px;
  border-top: 1px solid #202629;
  background: #323739;
  color: #4c5356;
}

.h-scroll i {
  width: 63px;
  height: 1px;
  margin-left: 7px;
  background: #50575a;
}

.h-scroll .end {
  margin-left: auto;
}

.ruler {
  display: flex;
  height: 14px;
  background: #070d12;
  color: #8b9296;
  font-family: Roboto, "Open Sans", sans-serif;
  font-size: 7px;
  line-height: 14px;
}

.ruler span {
  flex: none;
  width: 40px;
}

.ruler .strong {
  color: #c3c8ca;
  font-size: 8px;
}

.lanes {
  position: relative;
}

.lane {
  height: 32px;
  border-bottom: 1px solid #0a1115;
  background:
    repeating-linear-gradient(90deg, #0a1216 0 1px, transparent 1px 40px),
    repeating-linear-gradient(90deg, #141d21 0 1px, transparent 1px 10px),
    repeating-linear-gradient(90deg, #1d282c 0 160px, #172126 160px 320px);
}

.clip {
  position: absolute;
  top: 0;
  left: 1px;
  width: 39px;
  height: 31px;
  background: #0f1b19;
  color: #a8afb1;
  font-family: Roboto, "Open Sans", sans-serif;
  font-size: 7px;
  line-height: 10px;
}

.clip span {
  display: flex;
  align-items: center;
  gap: 2px;
  background: #222a2c;
  white-space: nowrap;
}

.clip svg {
  width: 6px;
  height: 6px;
}

/* Brush pointer over the lanes */
.cursor {
  position: absolute;
  top: 175px;
  left: 511px;
  width: 12px;
}

.watermark {
  position: absolute;
  top: 528px;
  right: 41px;
  color: #7d8689;
  font-family: Roboto, "Open Sans", sans-serif;
  font-size: 10px;
  line-height: 15px;
}

.watermark strong {
  font-size: 13px;
  font-weight: normal;
}

.v-scroll {
  flex: none;
  display: flex;
  flex-direction: column;
  align-items: center;
  width: 14px;
  border-left: 1px solid #15191c;
  background: #22282b;
  color: #596063;
}

.v-scroll .dot {
  width: 2px;
  height: 2px;
  margin: 6px 0;
  background: #080b0d;
}

.v-scroll b {
  width: 100%;
  height: 13px;
  background: #303538;
  line-height: 13px;
  text-align: center;
}

.v-scroll .thumb {
  width: 100%;
  height: 22px;
  background: #3a3f42;
}

.v-scroll .down {
  margin-top: auto;
}

/* Windows taskbar */
.taskbar {
  flex: none;
  display: grid;
  grid-template-columns: 1fr auto 1fr;
  align-items: center;
  height: 32px;
  padding: 0 13px;
  background: linear-gradient(90deg, #e8f69c, #e9f4a2 18%, #f2edc4 31%, #f0f0aa 50%, #e2f08c 72%, #f0ecb5 84%, #e8f987 91%, #e8f987);
  color: #3c4029;
  font-size: 8px;
}

.weather {
  justify-self: start;
  gap: 2px;
  line-height: 11px;
  text-align: left;
}

.weather small {
  color: #767b50;
  font-size: 8px;
}

.moon {
  position: relative;
}

.moon svg {
  width: 18px;
  height: 18px;
}

.taskbar em {
  position: absolute;
  top: -2px;
  right: 1px;
  min-width: 10px;
  height: 10px;
  border-radius: 5px;
  background: #c5202a;
  color: #fff;
  font-size: 7px;
  font-style: normal;
  line-height: 10px;
  text-align: center;
}

.apps {
  display: flex;
  align-items: center;
}

.app {
  position: relative;
  width: 24px;
  height: 26px;
}

.app svg {
  width: 16px;
  height: 16px;
}

.app.current {
  border-radius: 3px;
  background: #f8f8cf;
}

.app.open::after {
  content: "";
  position: absolute;
  bottom: 0;
  left: 10px;
  width: 4px;
  height: 2px;
  border-radius: 1px;
  background: #85885b;
}

.app.current::after {
  left: 7px;
  width: 10px;
  background: #1a79b5;
}

.app em {
  top: 1px;
  right: -1px;
}

.taskbar .rec {
  min-width: 8px;
  height: 8px;
  background: #e90909;
}

.search {
  display: flex;
  align-items: center;
  gap: 6px;
  width: 145px;
  height: 21px;
  margin: 0 5px 0 5px;
  padding: 0 4px 0 7px;
  border-radius: 11px;
  background: #faf8e7;
}

.search svg {
  width: 10px;
  height: 10px;
}

.search input {
  flex: 1;
  min-width: 0;
  padding: 0;
  border: 0;
  background: none;
  font: 9px "Open Sans", sans-serif;
}

.search input::placeholder {
  color: #66675e;
}

.search .clapper {
  width: 30px;
  height: 16px;
}

.app-strip {
  display: flex;
  justify-content: space-between;
  width: 348px;
}

.tray {
  justify-self: end;
  display: flex;
  align-items: center;
  gap: 8px;
}

.tray svg {
  width: 13px;
  height: 13px;
}

.net {
  display: flex;
  gap: 3px;
}

.tray time {
  margin-left: 1px;
  line-height: 11px;
  text-align: right;
}
```
